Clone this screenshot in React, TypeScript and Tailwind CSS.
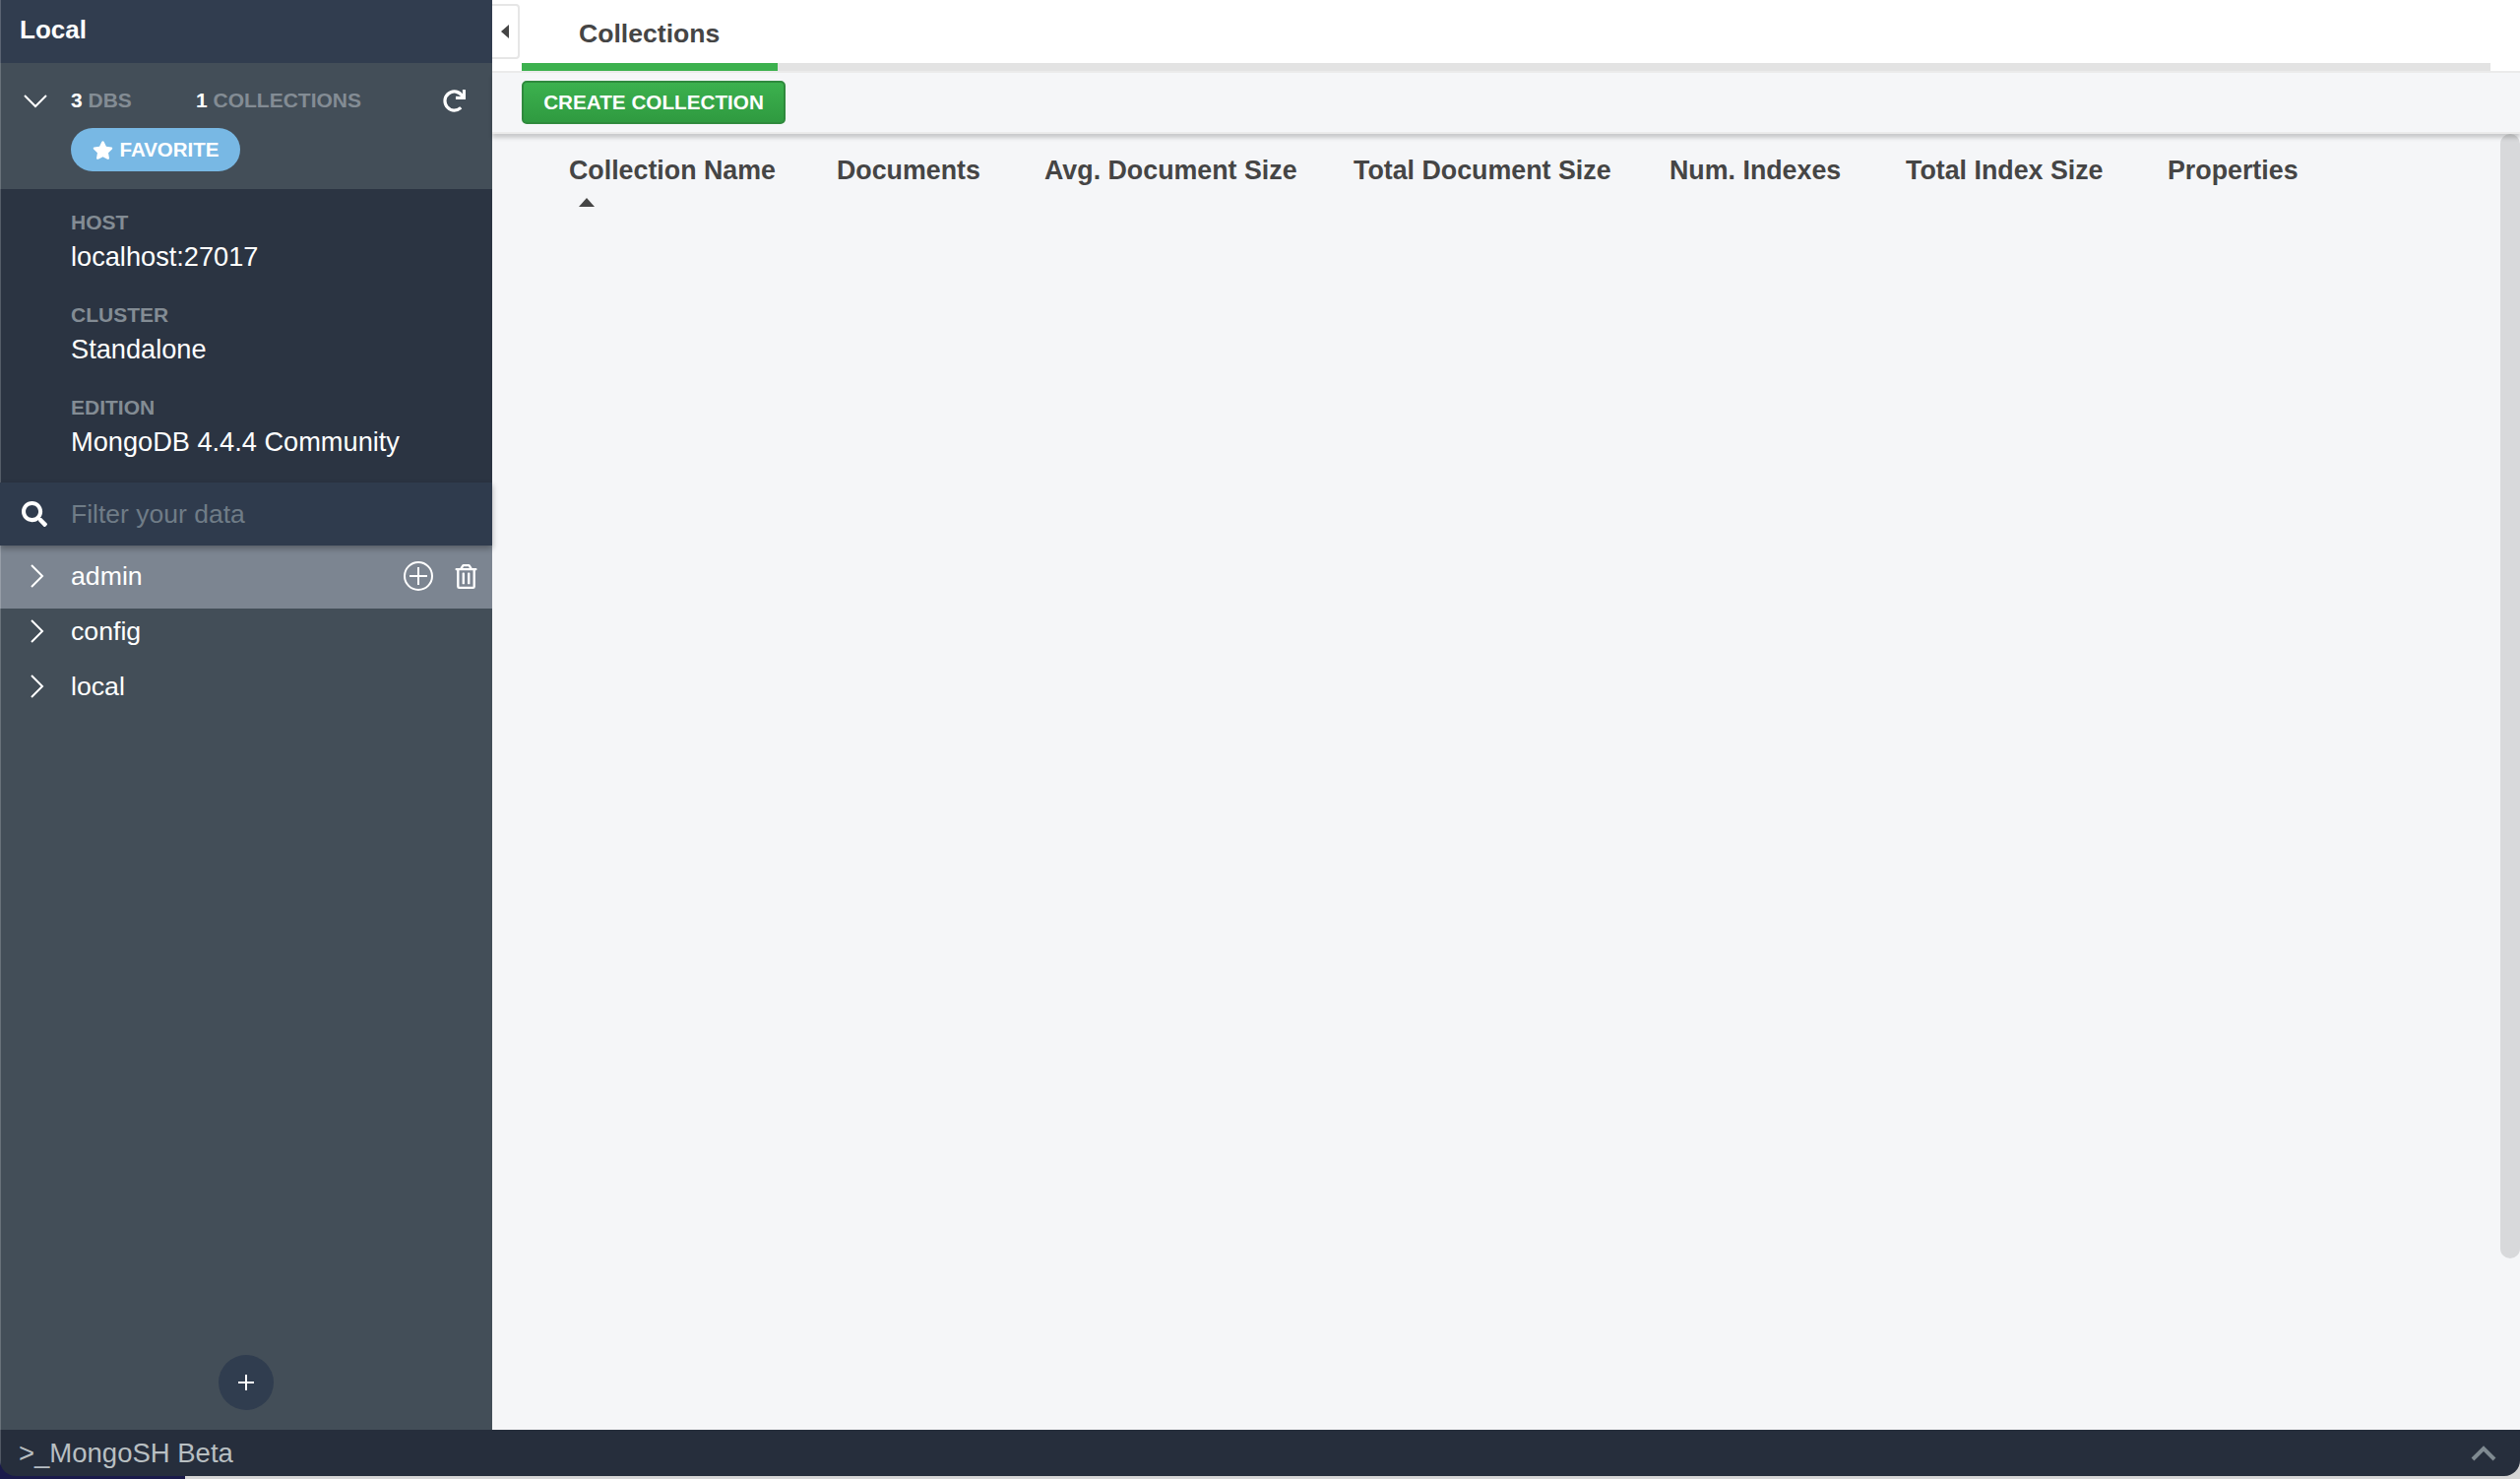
import { FaRedo, FaRegTrashAlt, FaSearch, FaStar } from "react-icons/fa";

const FONT = "font-['Liberation_Sans',Arial,sans-serif]";

const details = [
  { label: "HOST", value: "localhost:27017", pad: "pt-[19px]" },
  { label: "CLUSTER", value: "Standalone", pad: "pt-[24px]" },
  { label: "EDITION", value: "MongoDB 4.4.4 Community", pad: "pt-[24px]" },
];

const columns = [
  { name: "Collection Name", width: "w-[272px]" },
  { name: "Documents", width: "w-[211px]" },
  { name: "Avg. Document Size", width: "w-[314px]" },
  { name: "Total Document Size", width: "w-[321px]" },
  { name: "Num. Indexes", width: "w-[240px]" },
  { name: "Total Index Size", width: "w-[266px]" },
  { name: "Properties", width: "w-[200px]" },
];

function Chevron({ down }: { down?: boolean }) {
  return (
    <svg width="24" height="24" viewBox="0 0 24 24" fill="none" stroke="currentColor" strokeWidth="2" aria-hidden>
      {down ? <path d="M1 7l11 11L23 7" /> : <path d="M7 1l11 11L7 23" />}
    </svg>
  );
}

function DatabaseRow({ name, active }: { name: string; active?: boolean }) {
  return (
    <div
      className={
        active
          ? "-mb-[5px] flex h-[64px] shrink-0 items-center bg-[#7c8591] pr-[14px] pb-[2px]"
          : "flex h-[56px] shrink-0 items-center pr-[14px]"
      }
    >
      <div className="flex w-[72px] justify-center pl-[2px] text-white">
        <Chevron />
      </div>
      <span className="flex-1 text-[26.7px] text-white">{name}</span>
      {active && (
        <div className="flex items-center gap-[20px] text-white">
          <svg width="32" height="32" viewBox="0 0 32 32" fill="none" stroke="currentColor" strokeWidth="2" aria-hidden>
            <circle cx="16" cy="16" r="14" />
            <path d="M16 7v18M7 16h18" />
          </svg>
          <FaRegTrashAlt className="size-[25px]" />
        </div>
      )}
    </div>
  );
}

function Sidebar() {
  return (
    <aside className="flex w-[500px] shrink-0 flex-col bg-[#434e58]">
      <div className="flex h-[64px] items-center bg-[#313d4f] pb-[4px] pl-[20px] text-[26px] font-bold text-white">
        Local
      </div>

      <div className="h-[128px]">
        <div className="flex h-[66px] items-center pt-[10px] text-[21px] font-bold text-[#838c94]">
          <div className="flex w-[72px] justify-center text-white">
            <Chevron down />
          </div>
          <span className="w-[127px]">
            <span className="text-white">3</span> DBS
          </span>
          <span className="flex-1">
            <span className="text-white">1</span> COLLECTIONS
          </span>
          <FaRedo className="mr-[27px] size-[23px] text-white" />
        </div>
        <div className="pl-[72px]">
          <div className="flex h-[44px] w-[172px] items-center justify-center gap-[7px] rounded-full bg-[#78b8e4] text-[20.5px] font-bold text-white">
            <FaStar className="size-[21px]" />
            FAVORITE
          </div>
        </div>
      </div>

      <div className="h-[298px] bg-[#2b3442] pl-[72px]">
        {details.map((d) => (
          <div key={d.label} className={d.pad}>
            <div className="text-[21px] leading-[30px] font-bold text-[#838c94]">{d.label}</div>
            <div className="text-[27.2px] leading-[40px] text-white">{d.value}</div>
          </div>
        ))}
      </div>

      <div className="relative z-10 flex h-[64px] items-center bg-[#2f3b4d] shadow-[0_3px_6px_rgba(0,0,0,0.3)]">
        <div className="flex w-[72px] justify-start pl-[22px] text-white">
          <FaSearch className="size-[26px]" />
        </div>
        <input
          placeholder="Filter your data"
          className="min-w-0 flex-1 bg-transparent pt-[2px] text-[26.5px] text-white outline-none placeholder:text-[#6f7c87]"
        />
      </div>

      <div className="flex flex-1 flex-col">
        <DatabaseRow name="admin" active />
        <DatabaseRow name="config" />
        <DatabaseRow name="local" />
      </div>

      <div className="flex justify-center pb-[20px]">
        <div className="flex size-[56px] items-center justify-center rounded-full bg-[#303d4f] text-white">
          <svg width="18" height="18" viewBox="0 0 18 18" stroke="currentColor" strokeWidth="2" aria-hidden>
            <path d="M9 1v16M1 9h16" />
          </svg>
        </div>
      </div>
    </aside>
  );
}

function Main() {
  return (
    <main className="flex min-w-0 flex-1 flex-col bg-[#f5f6f8]">
      <div className="relative h-[74px] shrink-0 bg-white">
        <div className="flex h-[64px] items-center pt-[5px] pl-[88px] text-[26.6px] font-bold text-[#454545]">
          Collections
        </div>
        <div className="mx-[30px] h-[8px] bg-[#e3e3e3]">
          <div className="h-full w-[260px] bg-[#3cb14e]" />
        </div>
        <div className="h-[2px] bg-[#ebebeb]" />
        <button
          type="button"
          aria-label="Collapse sidebar"
          className="absolute top-[4px] left-0 flex h-[56px] w-[28px] items-center justify-center rounded-r-[4px] border-2 border-l-0 border-[#e6e6e6] bg-white"
        >
          <svg width="8" height="14" viewBox="0 0 8 14" fill="#454545" aria-hidden>
            <path d="M8 0v14L0 7z" />
          </svg>
        </button>
      </div>

      <div className="relative z-10 flex h-[62px] shrink-0 items-start border-b-2 border-[#ebebeb] pt-[8px] pl-[30px] shadow-[0_4px_4px_rgba(0,0,0,0.18)]">
        <button
          type="button"
          className="flex h-[44px] w-[268px] items-center justify-center rounded-[5px] border-2 border-[#2f8a3d] bg-gradient-to-b from-[#3cb14e] to-[#2f9a40] text-[20.7px] font-bold text-white"
        >
          CREATE COLLECTION
        </button>
      </div>

      <div className="flex min-h-0 flex-1">
        <div className="flex-1 pt-[21px] pl-[78px]">
          <div className="flex text-[26.8px] font-bold text-[#454545]">
            {columns.map((c) => (
              <div key={c.name} className={c.width}>
                <div className="leading-[32px]">{c.name}</div>
                {c.name === "Collection Name" && (
                  <svg className="mt-[12px] ml-[10px]" width="16" height="9" viewBox="0 0 16 9" fill="#454545" aria-hidden>
                    <path d="M8 0l8 9H0z" />
                  </svg>
                )}
              </div>
            ))}
          </div>
        </div>
        <div className="w-[20px] pb-[174px]">
          <div className="h-full rounded-[10px] bg-[#d8d9db]" />
        </div>
      </div>
    </main>
  );
}

export default function App() {
  return (
    <div className={`${FONT} relative h-[1502px] w-[2560px] overflow-hidden bg-white`}>
      <div className="relative z-10 flex h-[1499px] flex-col overflow-hidden rounded-b-[16px]">
        <div className="flex min-h-0 flex-1">
          <Sidebar />
          <Main />
        </div>
        <div className="flex h-[47px] shrink-0 items-center justify-between bg-[#262e3c] pr-[24px] pl-[19px] text-[#b8bfc2]">
          <span className="text-[27.5px]">&gt;_MongoSH Beta</span>
          <svg width="26" height="16" viewBox="0 0 26 16" fill="none" stroke="#7f8a91" strokeWidth="4" aria-hidden>
            <path d="M2 14L13 3l11 11" />
          </svg>
        </div>
        <div className="absolute inset-y-0 left-0 w-px bg-white/20" />
      </div>
      <div className="absolute right-0 bottom-0 left-0 flex h-[20px]">
        <div className="w-[188px] bg-[#1a1a4a]" />
        <div className="flex-1 bg-[#d6d6d6]" />
      </div>
    </div>
  );
}
